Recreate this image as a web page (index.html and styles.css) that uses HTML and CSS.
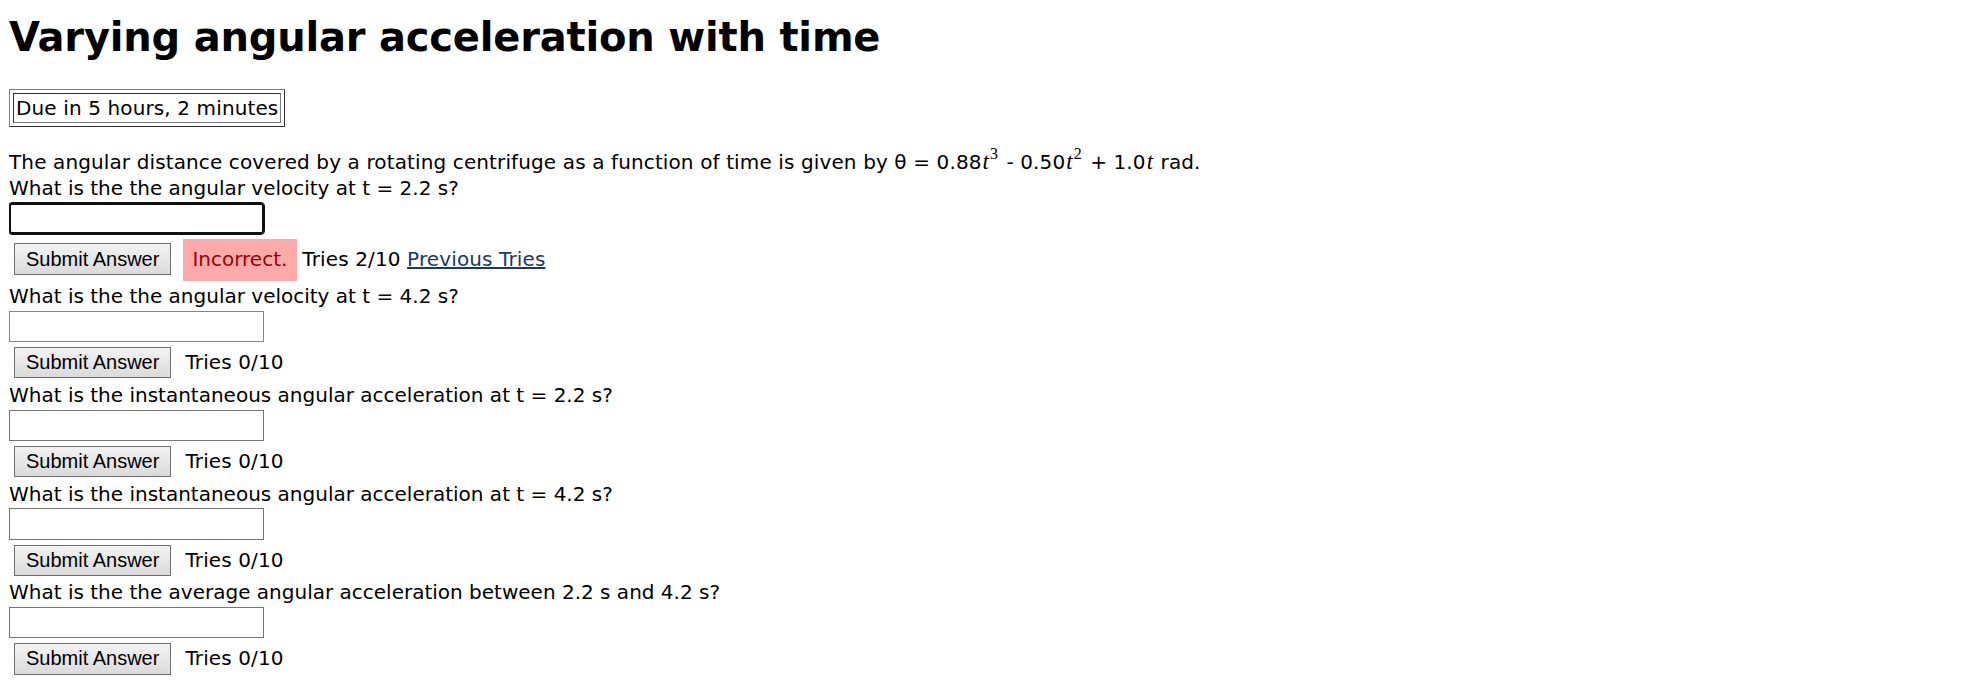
FILE: index.html
```html
<!DOCTYPE html>
<html lang="en">
<head>
<meta charset="utf-8">
<title>Varying angular acceleration with time</title>
<link rel="stylesheet" href="styles.css">
</head>
<body>
<h1 class="title">Varying angular acceleration with time</h1>
<table class="due"><tr><td>Due in 5 hours, 2 minutes</td></tr></table>
<div class="line intro">The angular distance covered by a rotating centrifuge as a function of time is given by θ = 0.88<i class="mv">t</i><sup class="sup">3</sup> - 0.50<i class="mv">t</i><sup class="sup">2</sup> + 1.0<i class="mv">t</i> rad.</div>

<div class="part">
  <div class="line">What is the the angular velocity at t = 2.2 s?</div>
  <input class="answer focused" type="text">
  <div class="row first"><input class="btn" type="submit" value="Submit Answer"><span class="bad">Incorrect.</span><span class="tries after-bad">Tries 2/10 <a class="prev" href="#">Previous Tries</a></span></div>
</div>

<div class="part">
  <div class="line">What is the the angular velocity at t = 4.2 s?</div>
  <input class="answer hover" type="text">
  <div class="row"><input class="btn" type="submit" value="Submit Answer"><span class="tries">Tries 0/10</span></div>
</div>

<div class="part">
  <div class="line">What is the instantaneous angular acceleration at t = 2.2 s?</div>
  <input class="answer" type="text">
  <div class="row"><input class="btn" type="submit" value="Submit Answer"><span class="tries">Tries 0/10</span></div>
</div>

<div class="part">
  <div class="line">What is the instantaneous angular acceleration at t = 4.2 s?</div>
  <input class="answer" type="text">
  <div class="row"><input class="btn" type="submit" value="Submit Answer"><span class="tries">Tries 0/10</span></div>
</div>

<div class="part">
  <div class="line">What is the the average angular acceleration between 2.2 s and 4.2 s?</div>
  <input class="answer" type="text">
  <div class="row"><input class="btn" type="submit" value="Submit Answer"><span class="tries">Tries 0/10</span></div>
</div>
</body>
</html>
```

FILE: styles.css
```css
html, body {
  background: #ffffff;
}
body {
  margin: 0 0 0 9px;
  font-family: "DejaVu Sans", Verdana, sans-serif;
  font-size: 20px;
  color: #000000;
}
.title {
  margin: 13px 0 0 0;
  font-family: "DejaVu Sans", Verdana, sans-serif;
  font-weight: bold;
  font-size: 40px;
  line-height: 48px;
  letter-spacing: -0.2px;
  white-space: nowrap;
}
.due {
  margin-top: 28.3px;
  border-collapse: separate;
  border-spacing: 3px;
  border: 1px solid;
  border-color: #808080 #303030 #303030 #808080;
}
.due td {
  border: 1px solid;
  border-color: #303030 #808080 #808080 #303030;
  padding: 2px;
  line-height: 24px;
  font-size: 20px;
  letter-spacing: 0.12px;
  white-space: nowrap;
}
.line {
  height: 24.25px;
  line-height: 27px;
  white-space: nowrap;
}
.intro {
  margin-top: 21px;
  height: 26.7px;
  letter-spacing: 0.12px;
}
.mv {
  font-family: "Liberation Serif", "Times New Roman", serif;
  font-style: italic;
  font-size: 23px;
  letter-spacing: 0;
  margin-left: 1px;
  margin-right: 1px;
}
.sup {
  font-family: "Liberation Serif", "Times New Roman", serif;
  font-size: 16px;
  letter-spacing: 0;
  line-height: 0;
  vertical-align: 10px;
  margin-right: 2px;
}
.answer {
  display: block;
  box-sizing: border-box;
  width: 255px;
  height: 31.25px;
  margin: 3.5px 0 0 0;
  padding: 0 3px;
  border: 1px solid #767676;
  border-radius: 0;
  background: #ffffff;
  font-size: 16px;
}
.answer.hover {
  border-color: #3d9ad6;
}
.answer.focused {
  border: 2px solid #101010;
  outline: 1px solid #101010;
  border-radius: 3px;
}
.row {
  display: flex;
  align-items: baseline;
  margin: 5px 0 3.5px 0;
}
.row.first {
  margin-top: 4.6px;
  margin-bottom: 2.25px;
}
.btn {
  box-sizing: border-box;
  height: 31.25px;
  margin: 0 0 0 5px;
  padding: 0 11px;
  border: 1px solid #707070;
  border-radius: 0;
  background: linear-gradient(#f3f3f3, #dadada);
  color: #000000;
  font-family: "Liberation Sans", Arial, sans-serif;
  font-size: 20px;
}
.tries {
  margin-left: 14px;
  line-height: 24.25px;
  letter-spacing: 0.12px;
  white-space: nowrap;
}
.tries.after-bad {
  margin-left: 5px;
}
.bad {
  margin-left: 12px;
  padding: 8px 10px 10px 9px;
  line-height: 24.25px;
  background: #ffaaaa;
  color: #9a0000;
}
.prev {
  color: #18386e;
  text-decoration: underline;
}
```
